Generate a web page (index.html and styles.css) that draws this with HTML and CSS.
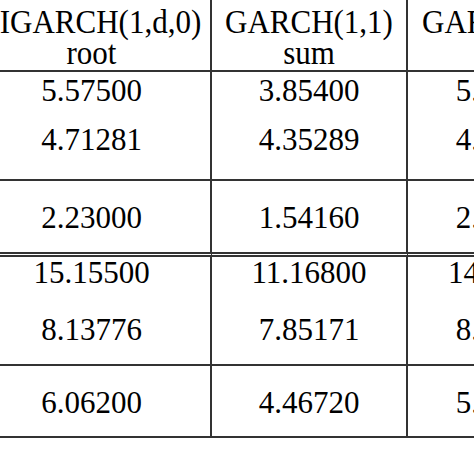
FILE: index.html
```html
<!DOCTYPE html>
<html>
<head>
<meta charset="utf-8">
<link rel="stylesheet" href="styles.css">
</head>
<body>
<div class="frame">
<table class="tbl">
  <colgroup><col class="c0"><col class="c1"><col class="c2"></colgroup>
  <tr class="head">
    <td class="h0"><div class="ln">IGARCH(1,d,0)</div><div class="ln">root</div></td>
    <td><div class="ln">GARCH(1,1)</div><div class="ln">sum</div></td>
    <td><div class="ln">GARCH(1,1)</div><div class="ln">root</div></td>
  </tr>
  <tr class="b1">
    <td><div class="ln">5.57500</div><div class="ln g1">4.71281</div></td>
    <td><div class="ln">3.85400</div><div class="ln g1">4.35289</div></td>
    <td><div class="ln">5.57500</div><div class="ln g1">4.71281</div></td>
  </tr>
  <tr class="r1">
    <td><div class="ln">2.23000</div></td>
    <td><div class="ln">1.54160</div></td>
    <td><div class="ln">2.23000</div></td>
  </tr>
  <tr class="b2">
    <td><div class="ln">15.15500</div><div class="ln g2">8.13776</div></td>
    <td><div class="ln">11.16800</div><div class="ln g2">7.85171</div></td>
    <td><div class="ln">14.15500</div><div class="ln g2">8.13776</div></td>
  </tr>
  <tr class="r2">
    <td><div class="ln">6.06200</div></td>
    <td><div class="ln">4.46720</div></td>
    <td><div class="ln">5.06200</div></td>
  </tr>
</table>
</div>
</body>
</html>
```
FILE: styles.css
```css
html, body {
  margin: 0;
  padding: 0;
  background: #ffffff;
  overflow: hidden;
}
.frame {
  width: 474px;
  height: 474px;
  overflow: hidden;
}
.tbl {
  margin-left: -27px;
  border-collapse: separate;
  border-spacing: 0;
  table-layout: fixed;
  width: 631px;
  font-family: "Liberation Serif", "Times New Roman", serif;
  font-size: 31px;
  color: #000;
}
.c0 { width: 239px; }
.c1 { width: 196px; }
.c2 { width: 196px; }
.tbl td {
  padding: 0;
  text-align: center;
  vertical-align: top;
  border-bottom: 2px solid #333;
  white-space: nowrap;
}
.tbl td:nth-child(1), .tbl td:nth-child(2) {
  border-right: 2px solid #333;
}
.ln {
  line-height: 31px;
  height: 31px;
}
.head td { padding-top: 6px; padding-bottom: 2px; }
.head .ln { transform: scaleY(1.12); }
.head td.h0 .ln:first-child { padding-left: 18px; }
.b1 td { padding-top: 3px; padding-bottom: 24px; }
.g1 { margin-top: 18px; }
.r1 td { padding-top: 21px; padding-bottom: 19px; border-bottom: 5px double #333; }
.b2 td { padding-top: 0; padding-bottom: 19px; }
.g2 { margin-top: 26px; }
.r2 td { padding-top: 21px; padding-bottom: 18px; }
```
